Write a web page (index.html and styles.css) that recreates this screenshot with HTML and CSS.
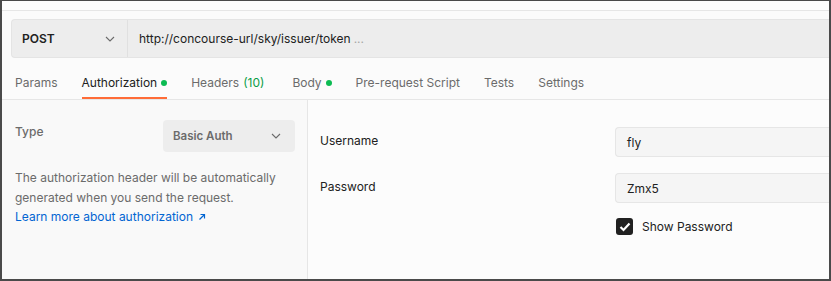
FILE: index.html
```html
<!DOCTYPE html>
<html lang="en">
<head>
    <meta charset="UTF-8">
    <meta name="viewport" content="width=device-width, initial-scale=1.0">
    <title>Authorization</title>
    <link rel="stylesheet" href="styles.css">
</head>
<body>
    <div class="frame">
        <div class="top-strip"></div>
        <div class="request">
            <div class="url-bar">
                <div class="method">
                    <span>POST</span>
                    <svg class="chevron" width="10" height="6" viewBox="0 0 10 6"><path d="M1 1l4 4 4-4" fill="none" stroke="#6b6b6b" stroke-width="1.1"/></svg>
                </div>
                <div class="url">http://concourse-url/sky/issuer/token <span class="more">...</span></div>
            </div>
            <div class="tabs">
                <div class="tab">Params</div>
                <div class="tab active">Authorization<span class="dot"></span></div>
                <div class="tab">Headers <span class="count">(10)</span></div>
                <div class="tab">Body<span class="dot"></span></div>
                <div class="tab">Pre-request Script</div>
                <div class="tab">Tests</div>
                <div class="tab">Settings</div>
            </div>
        </div>
        <div class="auth">
            <div class="auth-side">
                <div class="type-row">
                    <div class="type-label">Type</div>
                    <div class="select">
                        <span>Basic Auth</span>
                        <svg class="chevron" width="10" height="6" viewBox="0 0 10 6"><path d="M1 1l4 4 4-4" fill="none" stroke="#6b6b6b" stroke-width="1.1"/></svg>
                    </div>
                </div>
                <p class="hint">The authorization header will be automatically generated when you send the request.</p>
                <a class="learn" href="#">Learn more about authorization <svg width="8" height="8" viewBox="0 0 8 8"><path d="M1.5 6.5l5-5M2.5 1.5h4v4" fill="none" stroke="#0265d2" stroke-width="1.2"/></svg></a>
            </div>
            <div class="auth-main">
                <div class="field">
                    <label>Username</label>
                    <div class="input">fly</div>
                </div>
                <div class="field">
                    <label>Password</label>
                    <div class="input">Zmx5</div>
                </div>
                <div class="check-row">
                    <span class="checkbox"><svg width="12" height="10" viewBox="0 0 12 10"><path d="M1.5 5l3 3 6-6.5" fill="none" stroke="#fff" stroke-width="2.2"/></svg></span>
                    <span>Show Password</span>
                </div>
            </div>
        </div>
    </div>
</body>
</html>
```
FILE: styles.css
```css
* {
    margin: 0;
    padding: 0;
    box-sizing: border-box;
}
body {
    width: 831px;
    height: 281px;
    overflow: hidden;
    background-color: #fbfbfb;
    font-family: Inter, "Noto Sans", sans-serif;
    font-size: 12px;
    color: #212121;
}
.frame {
    width: 831px;
    height: 281px;
    border: 2px solid #4a4a4a;
    border-top-width: 1px;
    display: flex;
    flex-direction: column;
    overflow: hidden;
}
.top-strip {
    height: 10px;
    background-color: #fdfdfd;
    border-bottom: 1px solid #e6e6e6;
}
.request {
    padding-top: 8px;
    border-bottom: 1px solid #e6e6e6;
}
.url-bar {
    display: flex;
    height: 39px;
    margin-left: 9px;
    background-color: #ededed;
    border: 1px solid #e4e4e4;
    border-right: none;
    border-radius: 4px 0 0 4px;
}
.method {
    width: 116px;
    display: flex;
    align-items: center;
    justify-content: space-between;
    padding: 0 12px 0 10px;
    border-right: 1px solid #e0e0e0;
    font-weight: 600;
    font-size: 12px;
    color: #212121;
}
.url {
    display: flex;
    align-items: center;
    padding-left: 11px;
    font-size: 12px;
    color: #212121;
}
.url .more {
    color: #a6a6a6;
    margin-left: 3px;
}
.tabs {
    display: flex;
    gap: 24px;
    padding-left: 13px;
    height: 41px;
}
.tab {
    display: flex;
    align-items: center;
    padding-top: 10px;
    border-bottom: 2px solid transparent;
    color: #6b6b6b;
}
.tab.active {
    color: #212121;
    border-bottom-color: #ff6c37;
}
.dot {
    width: 6px;
    height: 6px;
    margin-left: 4px;
    border-radius: 50%;
    background-color: #0cbb52;
}
.count {
    color: #0a9d46;
    margin-left: 4px;
    margin-right: 4px;
}
.auth {
    flex: 1;
    display: flex;
}
.auth-side {
    width: 306px;
    padding: 20px 12px 0 13px;
    background-color: #f9f9f9;
    border-right: 1px solid #e6e6e6;
}
.type-row {
    display: flex;
    justify-content: space-between;
}
.type-label {
    padding-top: 4px;
    font-weight: 500;
    color: #6b6b6b;
}
.select {
    width: 132px;
    height: 32px;
    display: flex;
    align-items: center;
    justify-content: space-between;
    padding: 0 14px 0 10px;
    background-color: #ededed;
    border-radius: 4px;
    font-size: 11.5px;
    font-weight: 600;
    color: #6b6b6b;
}
.hint {
    margin-top: 16px;
    line-height: 19.5px;
    color: #6b6b6b;
}
.learn {
    display: inline-flex;
    align-items: center;
    gap: 5px;
    line-height: 19.5px;
    color: #0265d2;
    text-decoration: none;
}
.auth-main {
    flex: 1;
    padding: 27px 0 0 12px;
    background-color: #fcfcfc;
}
.field {
    display: flex;
    margin-bottom: 16px;
}
.field label {
    width: 295px;
    padding-top: 6px;
    color: #212121;
}
.input {
    flex: 1;
    height: 30px;
    display: flex;
    align-items: center;
    padding-left: 11px;
    background-color: #f5f5f5;
    border: 1px solid #e6e6e6;
    border-right: none;
    border-radius: 4px 0 0 4px;
    color: #212121;
}
.check-row {
    display: flex;
    align-items: center;
    gap: 9px;
    margin-left: 296px;
    margin-top: -1px;
}
.checkbox {
    width: 17px;
    height: 17px;
    display: flex;
    align-items: center;
    justify-content: center;
    background-color: #212121;
    border-radius: 3px;
}
```
